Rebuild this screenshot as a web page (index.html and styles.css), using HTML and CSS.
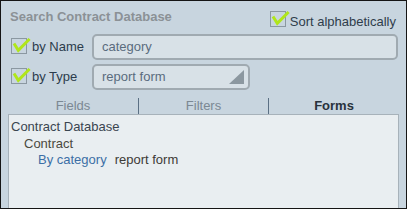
FILE: index.html
```html
<!DOCTYPE html>
<html>
<head>
<meta charset="utf-8">
<link rel="stylesheet" href="styles.css">
</head>
<body>
<div class="frame">
  <div class="header">
    <div class="title">Search Contract Database</div>
    <label class="sort">
      <span class="box"><svg class="tick" width="20" height="16" viewBox="0 0 20 16"><path d="M3 5.5 L7.3 12.3 L18.6 1" fill="none" stroke="#b0e61a" stroke-width="3" stroke-linejoin="miter"/></svg></span>
      <span class="sort-text">Sort alphabetically</span>
    </label>
  </div>
  <div class="rows">
    <label class="check">
      <span class="box"><svg class="tick" width="20" height="16" viewBox="0 0 20 16"><path d="M3 5.5 L7.3 12.3 L18.6 1" fill="none" stroke="#b0e61a" stroke-width="3"/></svg></span>
      <span class="check-text">by Name</span>
    </label>
    <div class="field">category</div>
    <label class="check">
      <span class="box"><svg class="tick" width="20" height="16" viewBox="0 0 20 16"><path d="M3 5.5 L7.3 12.3 L18.6 1" fill="none" stroke="#b0e61a" stroke-width="3"/></svg></span>
      <span class="check-text">by Type</span>
    </label>
    <div class="field select">report form<span class="arrow"></span></div>
  </div>
  <div class="tabs">
    <div class="tab">Fields</div>
    <div class="tab sep">Filters</div>
    <div class="tab sep active">Forms</div>
  </div>
  <div class="panel">
    <div class="line l0">Contract Database</div>
    <div class="line l1">Contract</div>
    <div class="line l2"><span class="cat">By category</span><span class="form">report form</span></div>
  </div>
</div>
</body>
</html>
```

FILE: styles.css
```css
html, body {
  margin: 0;
  padding: 0;
}
body {
  font-family: "Liberation Sans", Arial, sans-serif;
  font-size: 13px;
  line-height: 16px;
}
.frame {
  width: 407px;
  height: 209px;
  box-sizing: border-box;
  border: 1px solid #151515;
  background: #c8d5df;
  padding: 0 7px;
  display: flex;
  flex-direction: column;
}
.header {
  height: 25px;
  padding: 8px 2px 0 2px;
  display: flex;
  justify-content: space-between;
  align-items: flex-start;
}
.title {
  font-weight: bold;
  color: #8b9196;
}
.sort {
  display: flex;
  align-items: flex-start;
  margin-top: 2px;
  margin-right: 1px;
}
.sort-text {
  margin-top: 3px;
  margin-left: 4px;
  color: #2f3d4b;
}
.box {
  position: relative;
  width: 16px;
  height: 16px;
  box-sizing: border-box;
  border: 1px solid #8b98a1;
  flex: none;
}
.tick {
  position: absolute;
  left: -1px;
  top: -1px;
  overflow: visible;
}
.rows {
  display: grid;
  grid-template-columns: 81px 306px;
  grid-auto-rows: 26px;
  row-gap: 4px;
  padding-left: 3px;
}
.check {
  display: flex;
  align-items: center;
}
.check .box {
  margin-bottom: 3px;
}
.check-text {
  margin-left: 5px;
  color: #2c3c4c;
}
.field {
  box-sizing: border-box;
  height: 26px;
  border: 2px solid #a0aab1;
  border-radius: 5px;
  background: #d8e1e7;
  color: #5a6c7e;
  padding-left: 8px;
  display: flex;
  align-items: center;
}
.select {
  width: 158px;
  position: relative;
}
.arrow {
  position: absolute;
  right: 4px;
  bottom: 4px;
  width: 0;
  height: 0;
  border-style: solid;
  border-width: 0 0 14px 15px;
  border-color: transparent transparent #8c98a0 transparent;
}
.tabs {
  margin-top: 8px;
  display: grid;
  grid-template-columns: 130px 130px 1fr;
  height: 16px;
}
.tab {
  text-align: center;
  color: #7b8893;
}
.sep {
  border-left: 1px solid #5b7084;
}
.active {
  font-weight: bold;
  color: #28323c;
}
.panel {
  flex: 1;
  background: #e9eef1;
  border: 1px solid #a7b2ba;
  border-bottom: none;
  padding: 4px 2px 0 2px;
  line-height: 16.5px;
}
.l0 {
  color: #3a4550;
}
.l1 {
  padding-left: 13px;
  color: #4a4940;
}
.l2 {
  padding-left: 27px;
}
.cat {
  color: #3c6ea6;
}
.form {
  margin-left: 8px;
  color: #3d3a36;
}
```
